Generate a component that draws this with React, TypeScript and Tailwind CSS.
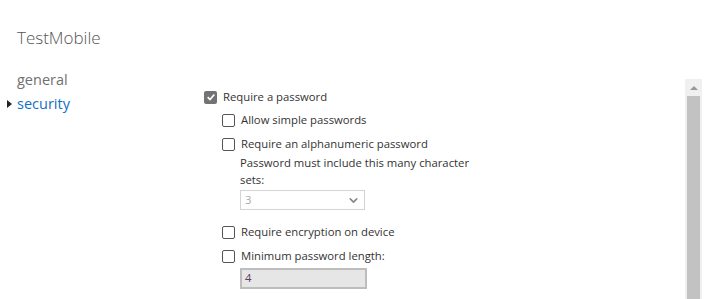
import { ChevronDown } from 'lucide-react'

const font = { fontFamily: '"Open Sans", "Noto Sans", sans-serif' }

const Box = ({ checked = false }: { checked?: boolean }) =>
  checked ? (
    <span className="w-[13px] h-[13px] shrink-0 rounded-[2px] bg-[#737373] flex items-center justify-center">
      <svg viewBox="0 0 12 12" className="w-[10px] h-[10px]">
        <path d="M2 6.2 L4.8 9 L10 3" fill="none" stroke="#fff" strokeWidth="2" />
      </svg>
    </span>
  ) : (
    <span className="w-[13px] h-[13px] shrink-0 rounded-[2px] border border-[#555] bg-white" />
  )

const Option = ({ label, checked }: { label: string; checked?: boolean }) => (
  <label className="flex items-center gap-[6px] h-[20px]">
    <Box checked={checked} />
    <span>{label}</span>
  </label>
)

export default function App() {
  return (
    <div className="w-[705px] h-[299px] bg-white overflow-hidden flex flex-col text-[#333]" style={font}>
      <div className="pl-[17px] pt-[25px] h-[68px] text-[17px] font-light text-[#555]">TestMobile</div>
      <div className="flex flex-1 min-h-0">
        <nav className="w-[187px] shrink-0 pl-[17px] text-[14.5px] leading-[24px]">
          <div className="text-[#707070]">general</div>
          <div className="relative text-[#1070c2]">
            <span className="absolute left-[-10px] top-[8px] w-0 h-0 border-y-[4px] border-y-transparent border-l-[5px] border-l-[#222]" />
            security
          </div>
        </nav>
        <div className="flex-1 flex pt-[11px]">
          <div className="flex-1 pl-[17px] pt-[8px] text-[11.3px]">
            <Option label="Require a password" checked />
            <div className="pl-[18px] pt-[3px]">
              <Option label="Allow simple passwords" />
              <div className="pt-[4px]">
                <Option label="Require an alphanumeric password" />
                <div className="pl-[18px] leading-[17px] w-[260px]">
                  Password must include this many character sets:
                </div>
                <div className="ml-[18px] mt-[2px] w-[125px] h-[20px] border border-[#d4d4d4] flex items-center justify-between px-[4px] text-[#aaa]">
                  <span>3</span>
                  <ChevronDown className="w-[13px] h-[13px] text-[#888]" strokeWidth={3} />
                </div>
              </div>
              <div className="pt-[12px]">
                <Option label="Require encryption on device" />
              </div>
              <div className="pt-[4px]">
                <Option label="Minimum password length:" />
                <div className="ml-[18px] mt-[2px] w-[127px] h-[21px] border-2 border-[#bdbdbd] bg-[#e6e6e6] flex items-center px-[3px] text-[#5a3a6a]">
                  4
                </div>
              </div>
            </div>
          </div>
          <div className="w-[17px] mr-[3px] bg-[#f0f0f0] flex flex-col items-center">
            <div className="h-[17px] flex items-center justify-center">
              <span className="w-0 h-0 border-x-[4px] border-x-transparent border-b-[4px] border-b-[#999]" />
            </div>
            <div className="w-[13px] flex-1 bg-[#c2c2c2]" />
          </div>
        </div>
      </div>
    </div>
  )
}
